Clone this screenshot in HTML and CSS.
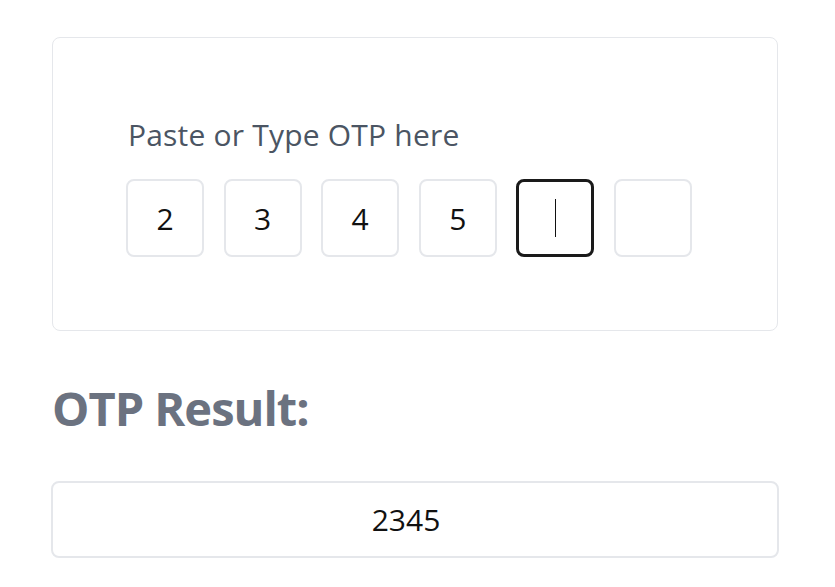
FILE: index.html
```html
<!DOCTYPE html>
<html lang="en">
<head>
<meta charset="utf-8">
<title>OTP Input</title>
<link rel="stylesheet" href="styles.css">
</head>
<body>
<main class="page">
  <section class="card">
    <label class="label" for="otp-1">Paste or Type OTP here</label>
    <div class="otp-row">
      <input class="otp-box" id="otp-1" type="text" maxlength="1" value="2">
      <input class="otp-box" type="text" maxlength="1" value="3">
      <input class="otp-box" type="text" maxlength="1" value="4">
      <input class="otp-box" type="text" maxlength="1" value="5">
      <div class="otp-box otp-focus"><span class="caret"></span></div>
      <input class="otp-box" type="text" maxlength="1" value="">
    </div>
  </section>
  <h2 class="result-title">OTP Result:</h2>
  <div class="result-box">2345</div>
</main>
</body>
</html>
```

FILE: styles.css
```css
* { box-sizing: border-box; }
html, body { margin: 0; padding: 0; background: #ffffff; }
body {
  font-family: "Open Sans", "Noto Sans", sans-serif;
  color: #111111;
}
.page {
  padding: 37px 56px 0 51px;
  display: flex;
  flex-direction: column;
}
.card {
  margin-left: 1px;
  width: 726px;
  height: 294px;
  border: 1px solid #e5e7eb;
  border-radius: 8px;
  padding: 77px 0 0 73px;
  display: flex;
  flex-direction: column;
}
.label {
  font-size: 30px;
  line-height: 40px;
  color: #4b5563;
  margin-left: 2px;
  letter-spacing: 0.2px;
}
.otp-row {
  margin-top: 24px;
  display: flex;
  gap: 19.6px;
}
.otp-box {
  width: 78px;
  height: 78px;
  border: 2px solid #e5e7eb;
  border-radius: 8px;
  background: #fff;
  text-align: center;
  font-family: inherit;
  font-size: 30px;
  color: #111;
  outline: none;
  padding: 0;
  display: flex;
  align-items: center;
  justify-content: center;
}
.otp-focus {
  border: 3px solid #1a1a1a;
}
.caret {
  display: block;
  width: 1.5px;
  height: 38px;
  background: #111;
}
.result-title {
  margin: 45px 0 0 1px;
  font-size: 47px;
  letter-spacing: -1px;
  line-height: 64px;
  font-weight: 700;
  color: #6b7280;
}
.result-box {
  margin-top: 41px;
  width: 728px;
  height: 77px;
  border: 2px solid #e5e7eb;
  border-radius: 8px;
  padding-right: 18px;
  display: flex;
  align-items: center;
  justify-content: center;
  font-size: 30px;
  color: #111;
}
```
